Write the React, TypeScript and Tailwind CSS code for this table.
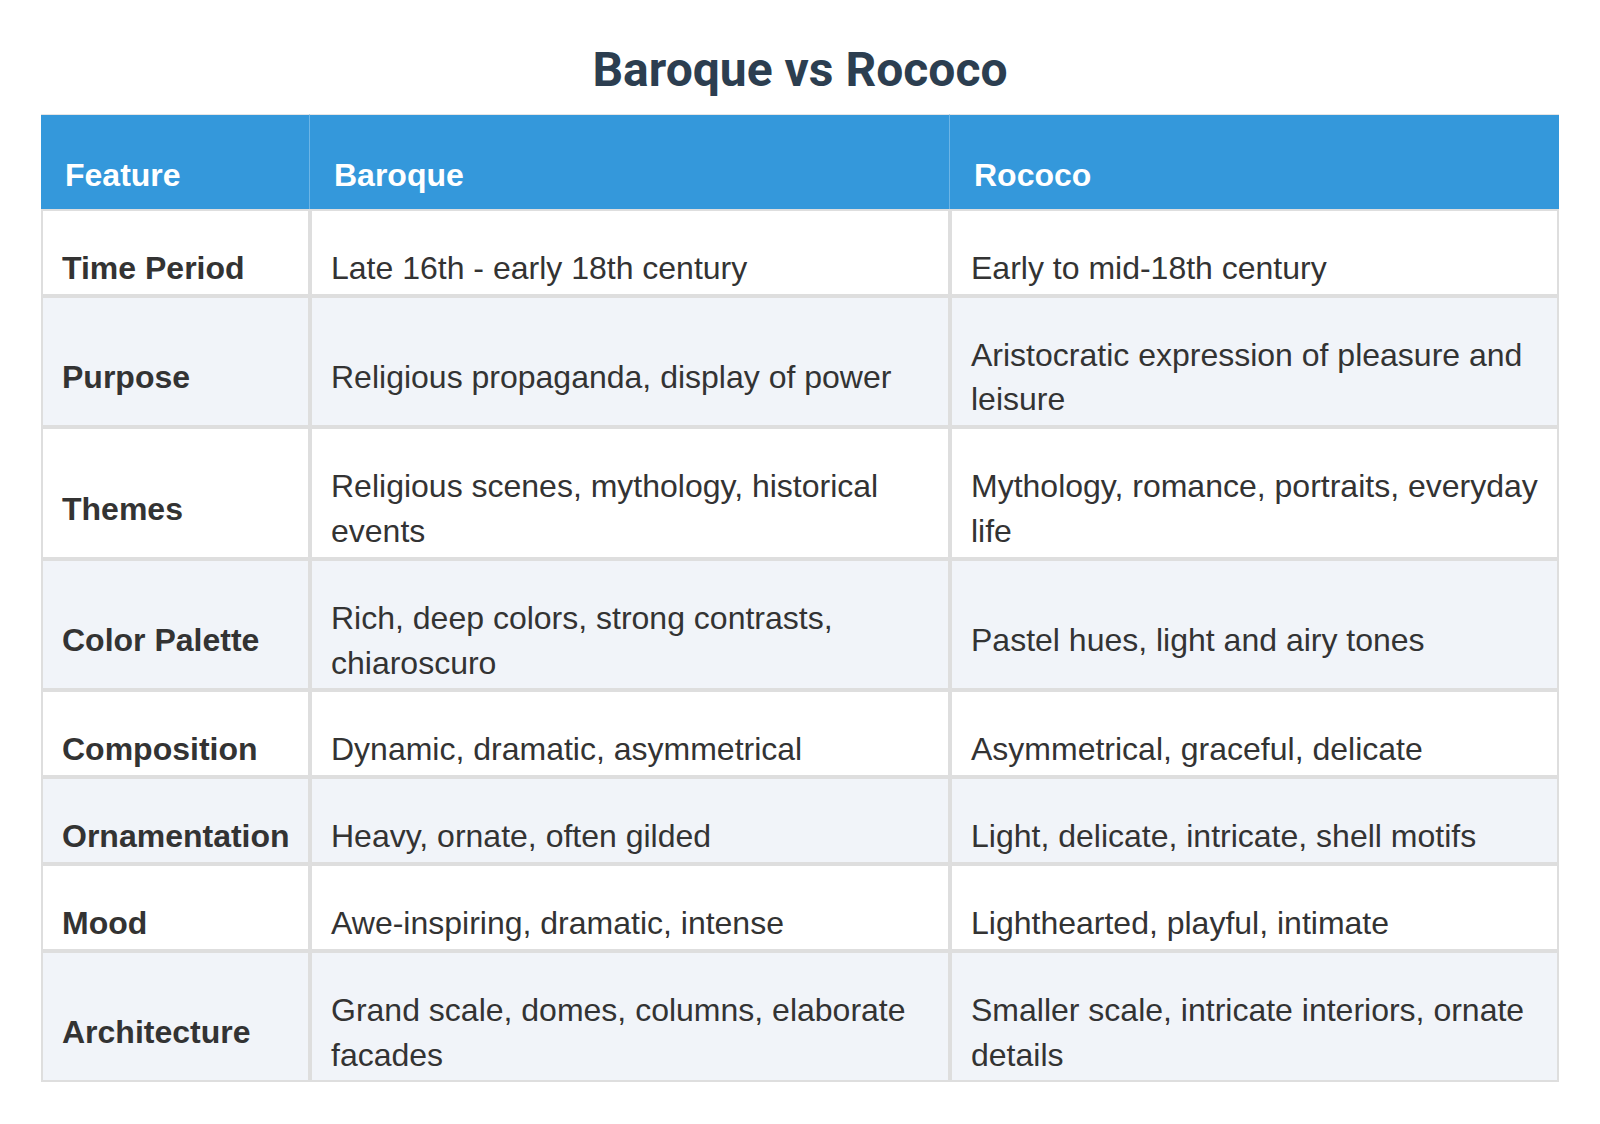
import React from "react";

const rows: [string, string, string][] = [
  ["Time Period", "Late 16th - early 18th century", "Early to mid-18th century"],
  ["Purpose", "Religious propaganda, display of power", "Aristocratic expression of pleasure and leisure"],
  ["Themes", "Religious scenes, mythology, historical events", "Mythology, romance, portraits, everyday life"],
  ["Color Palette", "Rich, deep colors, strong contrasts, chiaroscuro", "Pastel hues, light and airy tones"],
  ["Composition", "Dynamic, dramatic, asymmetrical", "Asymmetrical, graceful, delicate"],
  ["Ornamentation", "Heavy, ornate, often gilded", "Light, delicate, intricate, shell motifs"],
  ["Mood", "Awe-inspiring, dramatic, intense", "Lighthearted, playful, intimate"],
  ["Architecture", "Grand scale, domes, columns, elaborate facades", "Smaller scale, intricate interiors, ornate details"],
];

export default function App() {
  return (
    <div className="min-h-[1124px] bg-white px-[41px] pt-[42px]">
      <h1 className="mb-[16px] text-center font-['Roboto',sans-serif] text-[48px] font-bold leading-[56px] text-[#2c3e50]">
        Baroque vs Rococo
      </h1>
      <table className="w-full table-fixed border-separate border-spacing-0 font-['Liberation_Sans',Arial,sans-serif] text-[32px] leading-[1.4] text-[#333333]">
        <colgroup>
          <col className="w-[269px]" />
          <col className="w-[640px]" />
          <col />
        </colgroup>
        <thead>
          <tr className="bg-[#3498db]">
            {["Feature", "Baroque", "Rococo"].map((h, i) => (
              <th
                key={h}
                className={`border-t border-t-[#e5e5e5] pt-[38px] pb-[11px] pl-[24px] pr-[18px] text-left font-bold text-white ${
                  i < 2 ? "border-r border-r-[#6cb5e6]" : ""
                }`}
              >
                {h}
              </th>
            ))}
          </tr>
        </thead>
        <tbody>
          {rows.map((r, ri) => (
            <tr key={r[0]} className={ri % 2 === 1 ? "bg-[#f1f4f9]" : "bg-white"}>
              {r.map((c, ci) => (
                <td
                  key={ci}
                  className={`border-2 border-[#dedede] pt-[35px] pb-[3px] pl-[19px] pr-[17px] align-middle ${
                    ci === 0 ? "font-bold" : ""
                  }`}
                >
                  {c}
                </td>
              ))}
            </tr>
          ))}
        </tbody>
      </table>
    </div>
  );
}
